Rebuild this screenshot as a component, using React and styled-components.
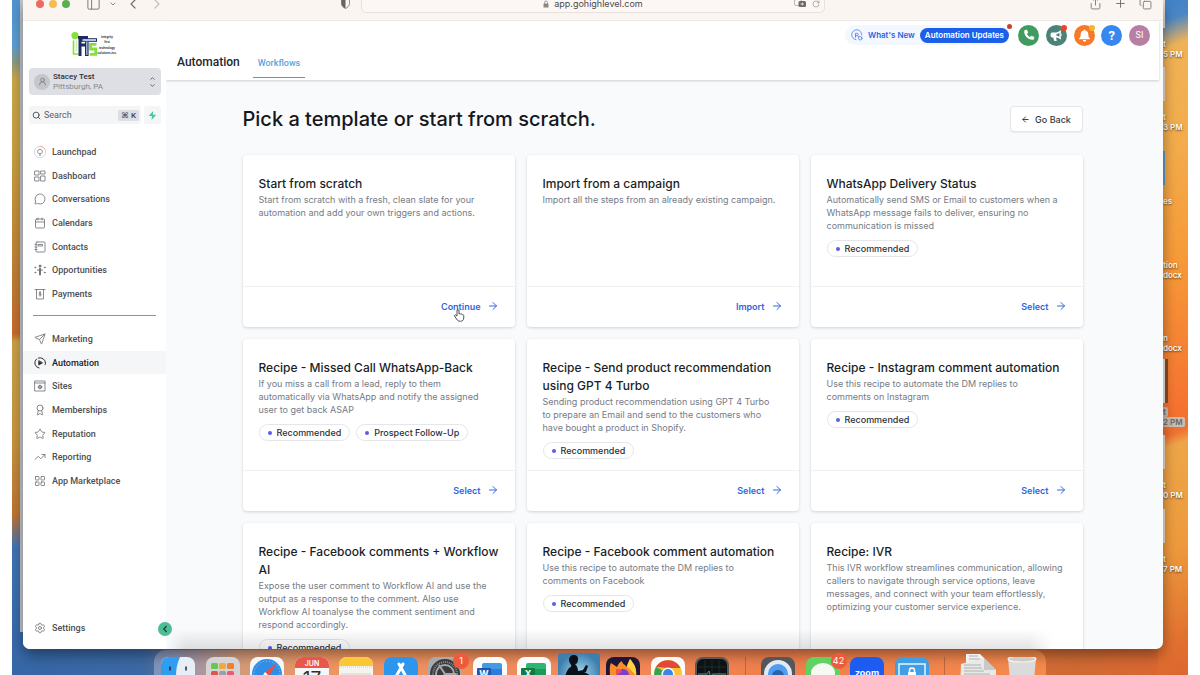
import React from "react";
import styled, { createGlobalStyle, css } from "styled-components";
import {
  ArrowLeft,
  ArrowRight,
  Award,
  Calendar,
  ChevronDown,
  ChevronLeft,
  ChevronRight,
  ChevronUp,
  Copy,
  LayoutGrid,
  MessageCircle,
  PanelLeft,
  Plus,
  RotateCw,
  Search,
  Send,
  Settings,
  Share,
  Star,
  TrendingUp,
  UserRound,
} from "lucide-react";

const GlobalStyle = createGlobalStyle`
  *, *::before, *::after { box-sizing: border-box; }
  body { margin: 0; background: #fff; font-family: Inter, "Liberation Sans", sans-serif; }
  h1, h2, p, ul { margin: 0; padding: 0; }
  ul { list-style: none; }
  button, input { font: inherit; border: 0; background: none; padding: 0; margin: 0; }
  button { cursor: pointer; }
  a { text-decoration: none; color: inherit; }
`;

/* ---------- desktop ---------- */

const Desktop = styled.div`
  display: grid;
  grid-template-rows: minmax(0, 1fr) 26px;
  height: 100vh;
  margin: 0 12px;
  overflow: hidden;
  background:
    linear-gradient(#4f93cf 0, #5c9fd6 45px, #8b9a83 62px, #c9a848 80px, #c9a040 150px, #bd7a33 290px, #c76a2c 334px, #c9a147 342px, #c79440 440px, #bd7433 515px, #3f74b4 548px, #3566a6 100%) left / 20px 100% no-repeat,
    linear-gradient(160deg, #3f83c9 0, #4b86c4 22px, #f0b257 48px, #f3ac4c 140px, #f79a38 250px, #f4702f 400px, #f07030 412px, #eda548 424px, #ee9a3c 520px, #e2702f 610px, #dd6630 100%) right / 30px 100% no-repeat,
    linear-gradient(90deg, #3566a6 0, #3b69a4 130px, #8e7d80 200px, #e8823f 280px, #ef7a44 60%, #cf6a34 90%, #dd6630 100%);
`;

const Stage = styled.div`
  display: flex;
  min-height: 0;
  padding-left: 8px;
`;

const BackWindow = styled.div`
  display: flex;
  flex: 1;
  min-width: 0;
  padding-left: 3px;
  background: linear-gradient(90deg, #c3c6cc 3px, transparent 3px) no-repeat left top / 100% 632px;
`;

const BrowserWindow = styled.div`
  position: relative;
  display: flex;
  flex: 1;
  flex-direction: column;
  min-width: 0;
  overflow: hidden;
  background: #f9fafb;
  border-radius: 0 0 7px 7px;
  box-shadow: 0 6px 14px rgba(0, 0, 0, 0.4);

  &::after {
    content: "";
    position: absolute;
    right: 110px;
    bottom: 0;
    left: 143px;
    height: 20px;
    background: linear-gradient(transparent, rgba(0, 0, 0, 0.11));
    mask-image: linear-gradient(90deg, transparent, #000 20px, #000 calc(100% - 24px), transparent);
    pointer-events: none;
  }
`;

const FileColumn = styled.ul`
  display: flex;
  flex-direction: column;
  width: 25px;
  height: 589px;
  margin-top: -15px;
  color: #fff;
  font: 600 8px/10px Inter, sans-serif;
  text-shadow: 0 1px 2px rgba(0, 0, 0, 0.6);
`;

const FileItem = styled.li`
  display: flex;
  flex: 1;
  flex-direction: column;
  align-items: flex-start;
  justify-content: flex-end;
  white-space: nowrap;

  span {
    ${(p) => p.$selected && css`background: #c6bdb4; color: #71685f; text-shadow: none; border-radius: 0 2px 2px 0; padding-right: 2px;`}
  }
`;

const FileThumb = styled.div`
  width: ${(p) => (p.$tone === "dark" ? 5 : 2)}px;
  height: ${(p) => (p.$tone === "dark" ? 44 : 34)}px;
  margin-bottom: ${(p) => (p.$tone === "dark" ? 4 : 11)}px;
  background: ${(p) => ({ light: "#e9dccb", blue: "#5d9fc4", none: "transparent", dark: "linear-gradient(90deg, #efe9e4 2px, #8b4a22 2px)" })[p.$tone]};
`;

/* ---------- browser chrome ---------- */

const Toolbar = styled.div`
  display: grid;
  flex: none;
  grid-template-columns: 338fr 464fr 338fr;
  align-items: center;
  height: 34px;
  margin-top: -13px;
  background: #fbf5f2;
  border-bottom: 1px solid #f0ebe8;
  color: #77716e;
`;

const ToolGroup = styled.div`
  display: flex;
  align-items: center;
  gap: ${(p) => p.$gap}px;
  padding: 0 11px 0 13px;
  justify-content: ${(p) => (p.$end ? "flex-end" : "flex-start")};
`;

const Light = styled.i`
  width: 8px;
  height: 8px;
  border-radius: 50%;
  background: ${(p) => p.$color};
`;

const Lights = styled.div`
  display: flex;
  gap: 5px;
  margin-right: 8px;
`;

const ToolButton = styled.button`
  display: flex;
  color: ${(p) => (p.$dim ? "#c5bfbc" : "#77716e")};
  ${(p) => p.$push && css`margin-left: auto;`}
`;

const AddressBar = styled.div`
  display: flex;
  align-items: center;
  gap: 5px;
  height: 18px;
  padding: 0 4px;
  border: 1px solid #e8e1de;
  border-radius: 5px;
  background: #fcf7f5;
  color: #4d4a49;
  font-size: 9px;

  &::before { content: ""; flex: 1; }
`;

const AddressTools = styled.div`
  display: flex;
  flex: 1;
  align-items: center;
  justify-content: flex-end;
  gap: 5px;
  color: #948e8b;
`;

/* ---------- sidebar ---------- */

const AppBody = styled.div`
  display: flex;
  flex: 1;
  min-height: 0;
`;

const Sidebar = styled.aside`
  position: relative;
  display: flex;
  flex: none;
  flex-direction: column;
  width: 143px;
  padding-top: 11px;
  background: #fff;
  color: #4c4f55;
  font-family: Roboto, sans-serif;
`;

const Logo = styled.a`
  align-self: center;
  display: block;
  height: 25px;
`;

const Account = styled.button`
  display: flex;
  align-items: center;
  gap: 3px;
  height: 27px;
  margin: 11px 5px 0 6px;
  padding: 0 5px;
  border-radius: 4px;
  background: #dddfe4;
  text-align: left;
`;

const AccountAvatar = styled.span`
  display: grid;
  place-items: center;
  width: 16px;
  height: 16px;
  border-radius: 50%;
  background: #c4c6ca;
  color: #74777d;
`;

const AccountText = styled.span`
  flex: 1;
  color: #85888f;
  font-size: 8px;
  line-height: 10px;

  strong {
    display: block;
    color: #2b3140;
    font-weight: 500;
  }
`;

const Carets = styled.span`
  display: flex;
  flex-direction: column;
  color: #555960;
`;

const SearchRow = styled.div`
  display: flex;
  gap: 3px;
  height: 18px;
  margin: 11px 5px 0 6px;
`;

const SearchBox = styled.label`
  display: flex;
  flex: 1;
  align-items: center;
  gap: 3px;
  min-width: 0;
  padding: 0 2px 0 3px;
  border-radius: 3px;
  background: #f3f5f7;

  input {
    flex: 1;
    width: 0;
    outline: 0;
    font-size: 9px;
    &::placeholder { color: #5d6066; opacity: 1; }
  }

  kbd {
    padding: 0 3px;
    border-radius: 2px;
    background: #dcdee1;
    color: #43464b;
    font: 500 8px/11px Roboto, "DejaVu Sans", sans-serif;
  }
`;

const BoltButton = styled.button`
  display: grid;
  place-items: center;
  width: 17px;
  border-radius: 3px;
  background: #f3f5f7;
`;

const NavList = styled.ul`
  display: flex;
  flex-direction: column;
  flex: none;
  height: 166px;

  li { display: flex; flex: 1; }
`;

const NavLink = styled.a`
  display: flex;
  flex: 1;
  align-items: center;
  gap: 6px;
  padding-left: 11px;
  color: ${(p) => (p.$active ? "#1d2025" : "#4c4f55")};
  background: ${(p) => (p.$active ? "#f4f6f8" : "transparent")};
  font-size: 9px;
  font-weight: 500;

  svg { color: ${(p) => (p.$active ? "#2b2e33" : "#73767c")}; }
`;

const Rule = styled.hr`
  width: 123px;
  height: 1px;
  margin: 9px 10px 11px;
  border: 0;
  background: #8f9297;
`;

const MainMenu = styled.nav`
  display: flex;
  flex: 1;
  flex-direction: column;
  padding-top: 16px;
  padding-bottom: 9px;
`;

const SettingsSlot = styled.div`
  display: flex;
  height: 24px;
  margin-top: auto;
`;

const CollapseButton = styled.button`
  position: absolute;
  right: -6px;
  bottom: 13px;
  z-index: 1;
  display: grid;
  place-items: center;
  width: 14px;
  height: 14px;
  border-radius: 50%;
  background: #4dbd94;
  color: #173d35;
`;

/* ---------- main area ---------- */

const Main = styled.main`
  display: flex;
  flex: 1;
  flex-direction: column;
  min-width: 0;
  padding-right: 4px;
`;

const Header = styled.header`
  display: flex;
  flex: none;
  justify-content: space-between;
  height: 59px;
  padding: 0 9px 0 11px;
  background: #fff;
  box-shadow: 0 1px 2px rgba(30, 40, 60, 0.2);
`;

const Tabs = styled.nav`
  display: flex;
  align-items: flex-end;
  align-self: flex-end;
  gap: 13px;
  padding-bottom: 2px;
  font-family: Roboto, sans-serif;
`;

const Section = styled.h2`
  color: #22262e;
  font-size: 12px;
  font-weight: 500;
  line-height: 32px;
`;

const Tab = styled.a`
  height: 31px;
  padding: 0 5px;
  border-bottom: 1px solid #4b9bd3;
  color: #5ba4dc;
  font-size: 9px;
  font-weight: 500;
  line-height: 32px;
`;

const HeaderTools = styled.div`
  display: flex;
  align-items: center;
  gap: 9px;
  height: 28px;
`;

const News = styled.div`
  position: relative;
  display: flex;
  align-items: center;
  gap: 5px;
  height: 20px;
  padding-left: 6px;
  border-radius: 10px;
  background: #f3f8ff;
  color: #2f62dd;
  font-size: 8px;
  font-weight: 600;

  &::after {
    content: "";
    position: absolute;
    top: -1px;
    right: -3px;
    width: 5px;
    height: 5px;
    border-radius: 50%;
    background: #c8402d;
  }
`;

const NewsLink = styled.a`
  ${(p) => p.$filled && css`
    height: 15px;
    padding: 0 5px;
    border-radius: 8px;
    background: #1d5fe8;
    color: #fff;
    line-height: 15px;
  `}
`;

const RoundButtons = styled.div`
  display: flex;
  justify-content: space-between;
  width: 132px;
`;

const RoundButton = styled.button`
  position: relative;
  display: grid;
  place-items: center;
  width: 21px;
  height: 21px;
  border-radius: 50%;
  background: ${(p) => p.$color};
  color: #fff;
  font-family: Roboto, sans-serif;
  font-size: ${(p) => (p.$bold ? 13 : 9)}px;
  font-weight: ${(p) => (p.$bold ? 700 : 400)};

  ${(p) => p.$dot && css`
    &::after {
      content: "";
      position: absolute;
      top: 0;
      right: 0;
      width: 6px;
      height: 6px;
      border-radius: 50%;
      background: ${p.$dot};
    }
  `}
`;

const Scroll = styled.div`
  flex: 1;
  min-height: 0;
  overflow: hidden;
  padding: 26px 20px 0;
`;

const Content = styled.div`
  max-width: 840px;
  margin: 0 auto;
`;

const TitleRow = styled.div`
  display: flex;
  align-items: center;
  justify-content: space-between;
  height: 26px;
  margin-bottom: 23px;
`;

const Title = styled.h1`
  color: #14171f;
  font-size: 20px;
  font-weight: 500;
`;

const BackButton = styled.button`
  display: flex;
  align-items: center;
  justify-content: center;
  gap: 5px;
  width: 73px;
  height: 26px;
  border: 1px solid #e4e6ea;
  border-radius: 4px;
  background: #fff;
  box-shadow: 0 1px 1px rgba(16, 24, 40, 0.06);
  color: #33373f;
  font-size: 9px;
  font-weight: 500;
`;

const CardGrid = styled.div`
  display: grid;
  grid-template-columns: repeat(3, minmax(0, 1fr));
  gap: 12px;
`;

const Card = styled.article`
  display: flex;
  flex-direction: column;
  min-height: 172px;
  border-radius: 4px;
  background: #fff;
  box-shadow: 0 1px 3px rgba(16, 24, 40, 0.17);
`;

const CardBody = styled.div`
  flex: 1;
  padding: 20px 12px 0 16px;
`;

const CardTitle = styled.h2`
  color: #1a1e27;
  font-size: 12px;
  font-weight: 500;
  line-height: 18px;
  white-space: pre-line;
`;

const CardText = styled.p`
  color: #767b85;
  font-size: 9px;
  line-height: 13px;
  white-space: pre-line;
`;

const Chips = styled.div`
  display: flex;
  gap: 6px;
  margin-top: 8px;
`;

const Chip = styled.span`
  display: flex;
  align-items: center;
  gap: 5px;
  height: 17px;
  padding: 0 8px;
  border: 1px solid #e4e6ec;
  border-radius: 9px;
  color: #2a2f3b;
  font-size: 9px;
  font-weight: 500;

  &::before {
    content: "";
    width: 4px;
    height: 4px;
    border-radius: 50%;
    background: #5d5bea;
  }
`;

const CardFooter = styled.div`
  display: flex;
  align-items: center;
  justify-content: flex-end;
  height: 41px;
  padding: 0 16px 2px 0;
  border-top: 1px solid #eff1f4;
`;

const CardAction = styled.button`
  position: relative;
  display: flex;
  align-items: center;
  gap: 6px;
  color: #3465dd;
  font-size: 9px;
  font-weight: 600;
`;

const Pointer = styled.svg`
  position: absolute;
  top: 9px;
  left: 12px;
`;

/* ---------- dock ---------- */

const Dock = styled.div`
  display: flex;
  align-items: flex-start;
  justify-content: space-between;
  width: 100%;
  max-width: 892px;
  height: 50px;
  margin: 1px auto 0;
  padding: 7px 7px 0;
  border-radius: 12px 12px 0 0;
  background: linear-gradient(90deg, #7d93bd 0, #a596a4 40px, #d69a78 90px, #ee9560 180px, #f2895a 50%, #ef7f4c 70%, #f58a4c 100%);
`;

const DockItem = styled.div`
  position: relative;
  width: 34px;
  height: 34px;

  svg { display: block; }
`;

const WideDockItem = styled(DockItem)`
  width: 42px;
  margin: -4px -4px 0;
`;

const DockRule = styled.i`
  width: 1px;
  height: 34px;
  margin: 0 5px;
  background: #b96a45;
`;

const DockBadge = styled.span`
  position: absolute;
  top: -4px;
  right: -7px;
  min-width: 16px;
  height: 16px;
  border-radius: 8px;
  background: #ee5b3c;
  color: #fff;
  font: 400 9px/16px Inter, sans-serif;
  text-align: center;
`;

/* ---------- drawn icons ---------- */

const Line = ({ children, size = 12 }) => (
  <svg width={size} height={size} viewBox="0 0 24 24" fill="none" stroke="currentColor" strokeWidth="1.7" strokeLinecap="round" strokeLinejoin="round" aria-hidden="true">
    {children}
  </svg>
);

const lucide = (Icon) => () => <Icon size={12} strokeWidth={1.7} aria-hidden="true" />;

const RocketIcon = () => (
  <Line>
    <circle cx="12" cy="12" r="11.5" stroke="#d3d5da" />
    <path d="M12 .5A11.5 11.5 0 0 1 22 6" stroke="#eda58f" />
    <path d="M9.500 15c-3.500-1-4-7 2.500-8.500 6.500 1.500 6 7.500 2.500 8.500zM10.500 18h3" />
  </Line>
);
const DashboardIcon = () => (
  <Line>
    <rect x="2" y="2" width="8" height="8" /><rect x="14" y="2" width="8" height="6" />
    <rect x="2" y="14" width="8" height="8" /><rect x="14" y="12" width="8" height="10" />
  </Line>
);
const ContactsIcon = () => (
  <Line>
    <rect x="4" y="2" width="18" height="20" rx="2" /><path d="M9 7h8v3H9zM2 7h4M2 12h4M2 17h4" />
  </Line>
);
const OpportunitiesIcon = () => (
  <Line>
    <circle cx="12" cy="4" r="2" fill="currentColor" /><path d="M12 9v12" strokeWidth="4" /><path d="M7 12h10" strokeWidth="2" />
    <circle cx="2.500" cy="7" r="1" /><circle cx="2.500" cy="17" r="1" /><circle cx="21.500" cy="7" r="1" /><circle cx="21.500" cy="17" r="1" />
  </Line>
);
const PaymentsIcon = () => (
  <Line>
    <path d="M2 3h20M5 3v19h14V3" /><path d="M14.500 9.500c-.500-1-4.500-1.500-4.500.500s4.500 1.200 4.500 3.200-4 1.800-4.800.300M12.200 7v9.500" />
  </Line>
);
const AutomationIcon = () => (
  <Line>
    <path d="M10 22A10.500 10.500 0 0 1 5 4M9 2a10.500 10.500 0 0 1 14 10" strokeWidth="2" />
    <path d="M9.500 8v8l7-4z" fill="currentColor" /><path d="M23 12c0 1.500-.300 2.500-.800 3.500" />
  </Line>
);
const SitesIcon = () => (
  <Line>
    <rect x="2" y="2" width="20" height="20" /><path d="M2 6h20" /><circle cx="12" cy="14" r="3.500" /><path d="M12 10.500v7M8.500 14h7" />
  </Line>
);

const BoltIcon = () => (
  <svg width="9" height="9" viewBox="0 0 24 24" aria-hidden="true">
    <path d="M13.500 0 2 13.500h8.500L9.500 24 22 10h-9z" fill="#45c79c" />
  </svg>
);

const LogoArt = () => (
  <svg width="47" height="25" viewBox="0 0 47 25" role="img" aria-label="Integrity first technology solutions">
    <circle cx="4" cy="3.600" r="3.600" fill="#86e03a" />
    <path d="M2.500 8.500V22h5" fill="none" stroke="#86e03a" strokeWidth="1.600" />
    <path d="M5.500 8.500v11" stroke="#c8f0a8" strokeWidth="1.500" />
    <path d="M7 5.500h10M9 5v19M9 13h6" fill="none" stroke="#1c2c63" strokeWidth="3" />
    <path d="M10 8h16" stroke="#1c2c63" strokeWidth="3.600" />
    <path d="M11.500 8h13.500" stroke="#dfe6f5" strokeWidth="1.600" />
    <path d="M15.800 9.500V24" stroke="#1c2c63" strokeWidth="3.600" />
    <path d="M15.800 9.500V23" stroke="#a9b8dc" strokeWidth="1.400" />
    <path d="M25.500 12.300h-6v4.700h5.200v5.300h-6" fill="none" stroke="#86e03a" strokeWidth="2.800" />
    <g fontFamily="Liberation Sans, sans-serif" fontSize="3" fontWeight="700" fill="#26282e" textAnchor="middle">
      <text x="36" y="6">integrity</text><text x="36" y="11">first</text>
      <text x="36" y="17">technology</text><text x="36" y="22">solutions,inc.</text>
    </g>
  </svg>
);

const NewsIcon = () => (
  <svg width="12" height="12" viewBox="0 0 24 24" fill="none" stroke="#4a7ae6" strokeWidth="1.600" strokeLinecap="round" aria-hidden="true">
    <path d="M10 21.500A10 10 0 1 1 21.500 12" />
    <path d="M9 17V8.500h3a2.500 2.500 0 0 1 0 5H9M13 13.500l2 2" /><circle cx="18.500" cy="18.500" r="3.500" />
  </svg>
);
const PhoneIcon = () => (
  <svg width="12" height="12" viewBox="0 0 24 24" fill="#fff" aria-hidden="true">
    <path d="M6.600 1.500 2.500 3C1.300 13 10.500 22.700 21 21.500l1.500-4.200c.200-.700-.100-1.300-.700-1.600l-4.300-1.900c-.600-.200-1.200-.100-1.600.400l-1.600 2C11.300 14.800 9.200 12.700 7.800 9.700l2-1.700c.500-.400.600-1 .400-1.500L8.200 2.200c-.300-.600-.900-.900-1.600-.700z" />
  </svg>
);
const MegaphoneIcon = () => (
  <svg width="13" height="13" viewBox="0 0 24 24" fill="#fff" aria-hidden="true">
    <path fillRule="evenodd" d="M20 2v18c-3-3-6-4.500-9-4.500L12.500 22H8l-2-6.500H4a3 3 0 0 1-3-3v-3a3 3 0 0 1 3-3h7C14 6.500 17 5 20 2zM17.500 7.500C15.500 8.700 13.500 9.300 12 9.400v3.200c1.500.100 3.500.700 5.500 1.900z" />
    <path d="M21 8.500a3 3 0 0 1 0 5z" />
  </svg>
);
const BellIcon = () => (
  <svg width="13" height="13" viewBox="0 0 24 24" fill="#fff" aria-hidden="true">
    <path d="M12 1a1.500 1.500 0 0 1 1.500 1.600C17 3.300 19 6 19 9.500c0 5 1.500 6.500 3 8V19H2v-1.500c1.500-1.500 3-3 3-8 0-3.500 2-6.200 5.500-6.900A1.500 1.500 0 0 1 12 1zM9 20.500h6a3 3 0 0 1-6 0z" />
  </svg>
);
const ShieldIcon = () => (
  <svg width="9" height="11" viewBox="0 0 18 22" aria-hidden="true">
    <path d="M9 1c3 1.500 5 2 8 2v8c0 5-4 8-8 10-4-2-8-5-8-10V3c3 0 5-.500 8-2z" fill="#fbf5f2" stroke="#7b7572" strokeWidth="1.600" />
    <path d="M9 1v20c-4-2-8-5-8-10V3c3 0 5-.500 8-2z" fill="#6b6562" />
  </svg>
);
const LockIcon = () => (
  <svg width="6" height="8" viewBox="0 0 12 16" aria-hidden="true">
    <path d="M3 8V5a3 3 0 0 1 6 0v3" fill="none" stroke="#8d8784" strokeWidth="1.600" /><rect x="1" y="7" width="10" height="8" rx="1" fill="#8d8784" />
  </svg>
);
const TranslateIcon = () => (
  <svg width="13" height="10" viewBox="0 0 26 20" aria-hidden="true">
    <rect x="1" y="1" width="14" height="12" rx="3" fill="none" stroke="#a8a29f" strokeWidth="1.500" />
    <rect x="9" y="4" width="15" height="12" rx="3" fill="#6f6967" /><path d="M13 10h7M16.500 7v6" stroke="#fbf5f2" strokeWidth="1.500" />
  </svg>
);

/* ---------- dock artwork ---------- */

const Tile = ({ fill, children, size = 34 }) => (
  <svg width={size} height={size} viewBox="0 0 34 34" aria-hidden="true">
    <rect width="34" height="34" rx="8" fill={fill} />
    {children}
  </svg>
);

const FinderArt = () => (
  <Tile fill="#e8eef5">
    <path d="M8 0h11c-3 6-4 13-4 19h4v15H8a8 8 0 0 1-8-8V8a8 8 0 0 1 8-8z" fill="#2f9df0" />
    <path d="M9 10v3M25 10v3" stroke="#1e2d42" strokeWidth="1.500" strokeLinecap="round" />
  </Tile>
);
const LaunchpadArt = () => (
  <Tile fill="#d5d3d3">
    {["#66c84e", "#f2a93c", "#ee8131", "#e6524b", "#9aa0a6", "#ea5a77", "#5a9df0", "#b36ce0", "#f0cf42"].map((c, i) => (
      <rect key={c} x={5 + (i % 3) * 8} y={6 + Math.floor(i / 3) * 8} width="7" height="6" rx="1.500" fill={c} />
    ))}
  </Tile>
);
const SafariArt = () => (
  <Tile fill="#f5f6f8">
    <circle cx="17" cy="17" r="15" fill="#2f8fe8" />
    <circle cx="17" cy="17" r="13" fill="none" stroke="#9ccbf5" strokeDasharray="1 2" />
    <path d="M27 6 19 19l-4-4z" fill="#e9503f" /><path d="M7 28l8-13 4 4z" fill="#fff" />
  </Tile>
);
const CalendarArt = () => (
  <Tile fill="#f7f7f7">
    <path d="M8 0h18a8 8 0 0 1 8 8v3H0V8a8 8 0 0 1 8-8z" fill="#e8574a" />
    <text x="17" y="9" fontSize="7" fontWeight="600" fill="#fff" textAnchor="middle" fontFamily="Inter, sans-serif">JUN</text>
    <text x="17" y="28" fontSize="19" fill="#303030" textAnchor="middle" fontFamily="Inter, sans-serif">17</text>
  </Tile>
);
const NotesArt = () => (
  <Tile fill="#f6f4ee">
    <path d="M8 0h18a8 8 0 0 1 8 8v1H0V8a8 8 0 0 1 8-8z" fill="#fac735" />
    <path d="M0 10h34" stroke="#d5cdbb" strokeDasharray="1 1" /><path d="M2 17h30" stroke="#d5d2ca" />
  </Tile>
);
const AppStoreArt = () => (
  <Tile fill="#2c95ee">
    <path d="M19 7 9 25M15 7l10 18M6 21h22" stroke="#fff" strokeWidth="3" strokeLinecap="round" />
  </Tile>
);
const GearArt = () => (
  <Tile fill="#a9aaac">
    <circle cx="17" cy="17" r="15" fill="#3a3b3d" /><circle cx="17" cy="17" r="12" fill="none" stroke="#8c8e91" strokeWidth="2" strokeDasharray="1 1" />
    <circle cx="17" cy="17" r="9" fill="none" stroke="#a5a7a9" strokeWidth="2" /><path d="M17 17 11 8M17 17h11M17 17l-6 9" stroke="#a5a7a9" strokeWidth="2" />
  </Tile>
);
const OfficeArt = ({ dark, mid, light, letter }) => (
  <Tile fill="#fbfbfb">
    <rect x="9" y="6" width="20" height="24" rx="2" fill={light} /><path d="M9 12h20v6H9z" fill={mid} />
    <rect x="4" y="11" width="14" height="14" rx="1" fill={dark} />
    <text x="11" y="20" fontSize="9" fontWeight="700" fill="#fff" textAnchor="middle" fontFamily="Inter, sans-serif">{letter}</text>
  </Tile>
);
const ReaderArt = () => (
  <svg width="42" height="42" viewBox="0 0 42 42" aria-hidden="true">
    <defs><radialGradient id="sky"><stop offset="0" stopColor="#a9dcf2" /><stop offset="1" stopColor="#3f7fae" /></radialGradient></defs>
    <rect width="42" height="42" rx="3" fill="url(#sky)" />
    <path d="M11 7c0-3 2-5 5-5s4 2 4 4c0 3-1 5-3 5 2 2 3 4 3 7l5-1 3-5 2 1-2 6-7 3v20H4c0-10 3-22 7-27 2-1 3-2 2-3-1-2-2-3-2-5z" fill="#0b0f16" />
    <path d="M18 20c5-2 12-1 15 4v18H18z" fill="#0b0f16" />
  </svg>
);
const FirefoxArt = () => (
  <Tile fill="#1d1638">
    <path d="M5 6c2 1 4 3 6 4 1-3 3-5 5-6 0 3 4 4 5 6 0-3 2-5 3-8 4 5 7 9 6 17-1 8-7 13-13 13S4 27 4 19c0-4-1-9 1-13z" fill="#fb8b2b" />
    <path d="M21 10c0-3 2-5 3-8 4 5 7 9 6 17-2-3-5-6-9-9z" fill="#ffd340" /><circle cx="17" cy="18" r="6" fill="#7b3fd0" /><path d="M10 12c3 0 6 1 6 3l-6 3z" fill="#ee4b54" />
  </Tile>
);
const ChromeArt = () => (
  <Tile fill="#fafafa">
    <circle cx="17" cy="17" r="14" fill="#f7c436" /><path d="M5 10a14 14 0 0 0 12 21l3-13z" fill="#35a355" />
    <path d="M4.900 10A14 14 0 0 1 29.500 11H17z" fill="#e3493b" /><circle cx="17" cy="17" r="6.500" fill="#fff" /><circle cx="17" cy="17" r="5" fill="#3f82ea" />
  </Tile>
);
const ActivityArt = () => (
  <Tile fill="#56585a">
    <rect x="2" y="2" width="30" height="30" rx="6" fill="#0e1213" /><path d="M3 10h28M3 17h28M10 3v28M17 3v28M24 3v28" stroke="#203a39" strokeWidth=".700" />
    <path d="M3 17h9l2-3 2 7 2-4h13" fill="none" stroke="#6fa8a2" strokeWidth=".800" />
  </Tile>
);
const QuickTimeArt = () => (
  <Tile fill="#53565d">
    <circle cx="17" cy="17" r="12" fill="#4f9cf0" stroke="#e3e9f2" strokeWidth="4" /><circle cx="17" cy="19" r="6" fill="#2d62a8" />
  </Tile>
);
const MessagesArt = () => (
  <Tile fill="#63d162"><ellipse cx="17" cy="16" rx="12" ry="10" fill="#f5f8f3" /></Tile>
);
const ZoomArt = () => (
  <Tile fill="#1c5cf0">
    <text x="17" y="19" fontSize="9" fontWeight="700" fill="#fff" textAnchor="middle" fontFamily="Inter, sans-serif">zoom</text>
  </Tile>
);
const LockScreenArt = () => (
  <Tile fill="#3f9fe6">
    <rect x="4" y="7" width="26" height="20" fill="none" stroke="#eaf5fd" strokeWidth="1.500" /><path d="M14.500 16v-2.500a2.500 2.500 0 0 1 5 0V16" fill="none" stroke="#fff" strokeWidth="1.500" /><rect x="13" y="15" width="8" height="7" rx="1" fill="#fff" />
  </Tile>
);
const PapersArt = () => (
  <svg width="34" height="34" viewBox="0 0 34 34" overflow="visible" aria-hidden="true">
    <path d="M5-3h14l4 4v8H5z" fill="#f1f1ef" /><path d="M0 7 23 1l12 12v21H-1z" fill="#e9e9e7" /><path d="M23 1v12h12z" fill="#c9c9c7" />
    <path d="M8-1h9M8 2h11M3 8h17M3 11h18M3 14h20M3 17h26" stroke="#a8a9a9" strokeWidth=".900" />
  </svg>
);
const TrashArt = () => (
  <svg width="34" height="34" viewBox="0 0 34 34" aria-hidden="true">
    <path d="M3 1h28l-3 33H6z" fill="#dcdbdb" /><ellipse cx="17" cy="2" rx="14" ry="3" fill="#cfcbc9" stroke="#f3f1f0" strokeWidth="1.200" />
  </svg>
);

/* ---------- data ---------- */

const primaryNav = [
  ["Launchpad", RocketIcon],
  ["Dashboard", DashboardIcon],
  ["Conversations", lucide(MessageCircle)],
  ["Calendars", lucide(Calendar)],
  ["Contacts", ContactsIcon],
  ["Opportunities", OpportunitiesIcon],
  ["Payments", PaymentsIcon],
];

const secondaryNav = [
  ["Marketing", lucide(Send)],
  ["Automation", AutomationIcon],
  ["Sites", SitesIcon],
  ["Memberships", lucide(Award)],
  ["Reputation", lucide(Star)],
  ["Reporting", lucide(TrendingUp)],
  ["App Marketplace", lucide(LayoutGrid)],
];

const templates = [
  { title: "Start from scratch", text: "Start from scratch with a fresh, clean slate for your\nautomation and add your own triggers and actions.", action: "Continue", hovered: true },
  { title: "Import from a campaign", text: "Import all the steps from an already existing campaign.", action: "Import" },
  { title: "WhatsApp Delivery Status", text: "Automatically send SMS or Email to customers when a\nWhatsApp message fails to deliver, ensuring no\ncommunication is missed", tags: ["Recommended"] },
  { title: "Recipe - Missed Call WhatsApp-Back", text: "If you miss a call from a lead, reply to them\nautomatically via WhatsApp and notify the assigned\nuser to get back ASAP", tags: ["Recommended", "Prospect Follow-Up"] },
  { title: "Recipe - Send product recommendation\nusing GPT 4 Turbo", text: "Sending product recommendation using GPT 4 Turbo\nto prepare an Email and send to the customers who\nhave bought a product in Shopify.", tags: ["Recommended"] },
  { title: "Recipe - Instagram comment automation", text: "Use this recipe to automate the DM replies to\ncomments on Instagram", tags: ["Recommended"] },
  { title: "Recipe - Facebook comments + Workflow\nAI", text: "Expose the user comment to Workflow AI and use the\noutput as a response to the comment. Also use\nWorkflow AI toanalyse the comment sentiment and\nrespond accordingly.", tags: ["Recommended"] },
  { title: "Recipe - Facebook comment automation", text: "Use this recipe to automate the DM replies to\ncomments on Facebook", tags: ["Recommended"] },
  { title: "Recipe: IVR", text: "This IVR workflow streamlines communication, allowing\ncallers to navigate through service options, leave\nmessages, and connect with your team effortlessly,\noptimizing your customer service experience." },
];

const files = [
  { lines: ["t", "5 PM"], tone: "light" },
  { lines: ["t", "3 PM"], tone: "light" },
  { lines: ["es"], tone: "blue" },
  { lines: ["tion", "docx"], tone: "none" },
  { lines: ["n", "docx"], tone: "none" },
  { lines: ["t", "2 PM"], tone: "dark", selected: true },
  { lines: ["t", "0 PM"], tone: "light" },
  { lines: ["t", "7 PM"], tone: "light" },
];

const dockApps = [
  [FinderArt], [LaunchpadArt], [SafariArt], [CalendarArt], [NotesArt], [AppStoreArt], [GearArt, "1"],
  [() => <OfficeArt dark="#1d56b4" mid="#2c7cd8" light="#3f9ae8" letter="W" />],
  [() => <OfficeArt dark="#107c41" mid="#1d9a5a" light="#2fb573" letter="X" />],
];
const dockMore = [[FirefoxArt], [ChromeArt], [ActivityArt]];
const dockRecent = [[QuickTimeArt], [MessagesArt, "42"], [ZoomArt], [LockScreenArt]];

const renderDock = (list) =>
  list.map(([Art, badge], i) => (
    <DockItem key={i}>
      <Art />
      {badge && <DockBadge>{badge}</DockBadge>}
    </DockItem>
  ));

function Nav({ items, active }) {
  return (
    <NavList>
      {items.map(([label, Icon]) => (
        <li key={label}>
          <NavLink href="#" $active={label === active}>
            <Icon />
            {label}
          </NavLink>
        </li>
      ))}
    </NavList>
  );
}

function TemplateCard({ title, text, tags, action = "Select", hovered }) {
  return (
    <Card>
      <CardBody>
        <CardTitle>{title}</CardTitle>
        <CardText>{text}</CardText>
        {tags && (
          <Chips>
            {tags.map((t) => <Chip key={t}>{t}</Chip>)}
          </Chips>
        )}
      </CardBody>
      <CardFooter>
        <CardAction>
          {action}
          <ArrowRight size={12} strokeWidth={2} />
          {hovered && (
            <Pointer width="12" height="13" viewBox="0 0 24 26" aria-hidden="true">
              <path d="M8 14V3.500a2 2 0 0 1 4 0V10c1-1.500 3.200-1 3.500.500 1-1 3-.500 3.300 1 1.200-.800 2.700 0 2.700 1.500V18c0 4-2.500 6.500-6.500 6.500-4.500 0-6-1.500-8-4.500l-4-6c-.800-1.500 1-3 2.500-1.800z" fill="#fff" stroke="#3b3e45" strokeWidth="1.800" strokeLinejoin="round" />
            </Pointer>
          )}
        </CardAction>
      </CardFooter>
    </Card>
  );
}

export default function App() {
  return (
    <Desktop>
      <GlobalStyle />
      <Stage>
        <BackWindow>
          <BrowserWindow>
            <Toolbar>
              <ToolGroup $gap={8}>
                <Lights>
                  <Light $color="#ee6a5f" /><Light $color="#f5bd4f" /><Light $color="#57b04f" />
                </Lights>
                <ToolButton aria-label="Sidebar"><PanelLeft size={15} strokeWidth={1.5} /></ToolButton>
                <ToolButton aria-label="Tab groups"><ChevronDown size={8} strokeWidth={2.5} /></ToolButton>
                <ToolButton aria-label="Back"><ChevronLeft size={16} strokeWidth={1.8} /></ToolButton>
                <ToolButton aria-label="Forward" $dim><ChevronRight size={16} strokeWidth={1.8} /></ToolButton>
                <ToolButton aria-label="Privacy" $push><ShieldIcon /></ToolButton>
              </ToolGroup>
              <AddressBar>
                <LockIcon />
                app.gohighlevel.com
                <AddressTools><TranslateIcon /><RotateCw size={8} strokeWidth={2} /></AddressTools>
              </AddressBar>
              <ToolGroup $gap={12} $end>
                <ToolButton aria-label="Share"><Share size={13} strokeWidth={1.6} /></ToolButton>
                <ToolButton aria-label="New tab"><Plus size={13} strokeWidth={1.8} /></ToolButton>
                <ToolButton aria-label="Tabs"><Copy size={13} strokeWidth={1.6} /></ToolButton>
              </ToolGroup>
            </Toolbar>
            <AppBody>
              <Sidebar>
                <Logo href="#"><LogoArt /></Logo>
                <Account>
                  <AccountAvatar><UserRound size={9} /></AccountAvatar>
                  <AccountText><strong>Stacey Test</strong>Pittsburgh, PA</AccountText>
                  <Carets><ChevronUp size={7} strokeWidth={3} /><ChevronDown size={7} strokeWidth={3} /></Carets>
                </Account>
                <SearchRow>
                  <SearchBox>
                    <Search size={9} strokeWidth={2.5} />
                    <input type="text" placeholder="Search" aria-label="Search" />
                    <kbd>⌘ K</kbd>
                  </SearchBox>
                  <BoltButton aria-label="Quick actions"><BoltIcon /></BoltButton>
                </SearchRow>
                <MainMenu>
                  <Nav items={primaryNav} />
                  <Rule />
                  <Nav items={secondaryNav} active="Automation" />
                  <SettingsSlot>
                    <NavLink href="#"><Settings size={12} strokeWidth={1.7} />Settings</NavLink>
                  </SettingsSlot>
                </MainMenu>
                <CollapseButton aria-label="Collapse sidebar"><ChevronLeft size={10} strokeWidth={3} /></CollapseButton>
              </Sidebar>
              <Main>
                <Header>
                  <Tabs>
                    <Section>Automation</Section>
                    <Tab href="#">Workflows</Tab>
                  </Tabs>
                  <HeaderTools>
                    <News>
                      <NewsIcon />
                      <NewsLink href="#">What's New</NewsLink>
                      <NewsLink href="#" $filled>Automation Updates</NewsLink>
                    </News>
                    <RoundButtons>
                      <RoundButton $color="#409b61" aria-label="Call"><PhoneIcon /></RoundButton>
                      <RoundButton $color="#4c8378" $dot="#f0402c" aria-label="Announcements"><MegaphoneIcon /></RoundButton>
                      <RoundButton $color="#f9792b" $dot="#f6b42c" aria-label="Notifications"><BellIcon /></RoundButton>
                      <RoundButton $color="#3788ee" $bold aria-label="Help">?</RoundButton>
                      <RoundButton $color="#b67fa3">SI</RoundButton>
                    </RoundButtons>
                  </HeaderTools>
                </Header>
                <Scroll>
                  <Content>
                    <TitleRow>
                      <Title>Pick a template or start from scratch.</Title>
                      <BackButton><ArrowLeft size={9} strokeWidth={2.5} />Go Back</BackButton>
                    </TitleRow>
                    <CardGrid>
                      {templates.map((t) => <TemplateCard key={t.title} {...t} />)}
                    </CardGrid>
                  </Content>
                </Scroll>
              </Main>
            </AppBody>
          </BrowserWindow>
        </BackWindow>
        <FileColumn>
          {files.map((f, i) => (
            <FileItem key={i} $selected={f.selected}>
              <FileThumb $tone={f.tone} />
              {f.lines.map((l) => <span key={l}>{l}</span>)}
            </FileItem>
          ))}
        </FileColumn>
      </Stage>
      <Dock>
        {renderDock(dockApps)}
        <WideDockItem><ReaderArt /></WideDockItem>
        {renderDock(dockMore)}
        <DockRule />
        {renderDock(dockRecent)}
        <DockRule />
        {renderDock([[PapersArt], [TrashArt]])}
      </Dock>
    </Desktop>
  );
}
